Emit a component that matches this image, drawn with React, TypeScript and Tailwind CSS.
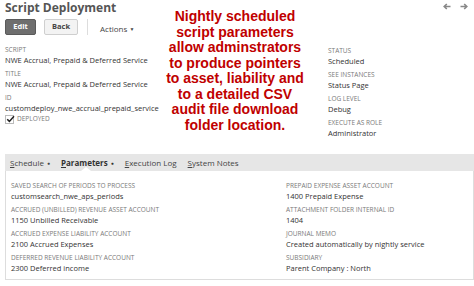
import React from "react";

const Field: React.FC<{ label: string; value: string }> = ({ label, value }) => (
  <div className="mb-[3px]">
    <div className="h-[10px] leading-[10px] text-[6.5px] uppercase text-[#7a7a7a]">{label}</div>
    <div className="h-[11px] leading-[11px] text-[7.5px] text-[#333]">{value}</div>
  </div>
);

const tabs = [
  { key: "S", rest: "chedule", dot: true },
  { key: "P", rest: "arameters", dot: true, active: true },
  { key: "E", rest: "xecution Log" },
  { key: "S", rest: "ystem Notes" },
];

export default function App() {
  return (
    <div className="relative w-[474px] h-[286px] overflow-hidden bg-white font-['Open_Sans',sans-serif]">
      {/* Header */}
      <div className="flex items-start justify-between pl-[5px] pr-[5px]">
        <h1 className="text-[12px] leading-[16px] font-bold text-[#555]">Script Deployment</h1>
        <div className="flex gap-[9px] pt-[3px] pr-[1px] text-[#888]">
          <svg width="8" height="7" viewBox="0 0 8 7">
            <path d="M7.5 3.5H1.5M3.8 1L1.2 3.5 3.8 6" stroke="currentColor" strokeWidth="1.6" fill="none" />
          </svg>
          <svg width="8" height="7" viewBox="0 0 8 7">
            <path d="M0.5 3.5H6.5M4.2 1L6.8 3.5 4.2 6" stroke="currentColor" strokeWidth="1.6" fill="none" />
          </svg>
        </div>
      </div>

      {/* Buttons */}
      <div className="flex items-center pl-[5px] mt-[3px] h-[16px]">
        <button className="w-[31px] h-[16px] rounded-[2px] bg-[#6e6e6e] border border-[#5a5a5a] text-white text-[7.5px] font-bold">
          Edit
        </button>
        <button className="ml-[8px] w-[34px] h-[16px] rounded-[2px] bg-[#f3f3f3] border border-[#cfcfcf] text-[#444] text-[7.5px] font-bold">
          Back
        </button>
        <div className="ml-[9px] w-px h-[16px] bg-[#ddd]" />
        <div className="ml-[12px] pt-[4px] text-[8px] text-[#444]">
          Actions <span className="text-[5px] align-middle">▼</span>
        </div>
      </div>

      {/* Main fields */}
      <div className="flex pl-[5px] pt-[10px] h-[119px]">
        <div className="w-[323px]">
          <Field label="Script" value="NWE Accrual, Prepaid & Deferred Service" />
          <Field label="Title" value="NWE Accrual, Prepaid & Deferred Service" />
          <Field label="ID" value="customdeploy_nwe_accrual_prepaid_service" />
          <div className="flex items-center gap-[3px] -mt-[3px]">
            <div className="relative w-[9px] h-[9px] border border-[#bbb] bg-white">
              <svg className="absolute -top-[1px] left-0" width="9" height="8" viewBox="0 0 9 8">
                <path d="M1.2 4.2L3.4 6.4 8 1.2" stroke="#222" strokeWidth="1.5" fill="none" />
              </svg>
            </div>
            <span className="text-[6.5px] text-[#7a7a7a] leading-[10px]">DEPLOYED</span>
          </div>
        </div>
        <div className="pt-px">
          <Field label="Status" value="Scheduled" />
          <Field label="See Instances" value="Status Page" />
          <Field label="Log Level" value="Debug" />
          <Field label="Execute as Role" value="Administrator" />
        </div>
      </div>

      {/* Tabs */}
      <div className="relative ml-[5px] h-[17px] bg-[#e6e6e6] flex items-center pl-[5px] gap-[11px] text-[8px] text-[#444]">
        {tabs.map((t, i) => (
          <span key={i} className={t.active ? "font-bold text-[#333]" : ""}>
            <span className="underline">{t.key}</span>
            {t.rest}
            {t.dot && <span className="ml-[3px] text-[5px] align-middle">●</span>}
          </span>
        ))}
        <div className="absolute left-[76px] bottom-0 w-0 h-0 border-l-[5px] border-r-[5px] border-b-[4px] border-l-transparent border-r-transparent border-b-white" />
      </div>

      {/* Parameters box */}
      <div className="ml-[5px] h-[109px] border border-t-0 border-[#ddd] flex pl-[5px] pt-[10px]">
        <div className="w-[275px]">
          <Field label="Saved search of periods to process" value="customsearch_nwe_aps_periods" />
          <Field label="Accrued (unbilled) revenue asset account" value="1150  Unbilled Receivable" />
          <Field label="Accrued expense liability account" value="2100 Accrued Expenses" />
          <Field label="Deferred revenue liability account" value="2300 Deferred income" />
        </div>
        <div>
          <Field label="Prepaid expense asset account" value="1400 Prepaid Expense" />
          <Field label="Attachment folder internal ID" value="1404" />
          <Field label="Journal memo" value="Created automatically by nightly service" />
          <Field label="Subsidiary" value="Parent Company : North" />
        </div>
      </div>

      {/* Annotation overlay */}
      <div className="absolute left-[160px] top-[9px] w-[150px] text-center font-['Liberation_Sans',Arial,sans-serif] font-bold text-[14px] leading-[15.5px] text-[#c00000]">
        Nightly scheduled<br />
        script parameters<br />
        allow adminstrators<br />
        to produce pointers<br />
        to asset, liability and<br />
        to a detailed CSV<br />
        audit file download<br />
        folder location.
      </div>
    </div>
  );
}
